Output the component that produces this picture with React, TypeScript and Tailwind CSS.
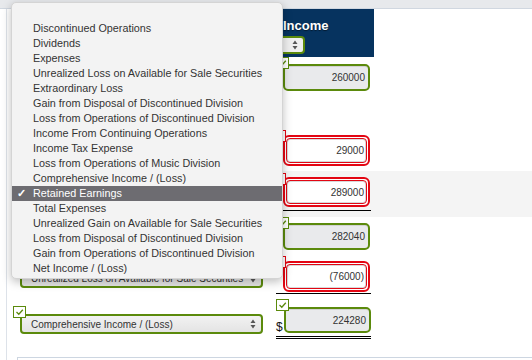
import React from "react";

const GREEN = "border-[#5b8a0c]";

const menuItems = [
  "Discontinued Operations",
  "Dividends",
  "Expenses",
  "Unrealized Loss on Available for Sale Securities",
  "Extraordinary Loss",
  "Gain from Disposal of Discontinued Division",
  "Loss from Operations of Discontinued Division",
  "Income From Continuing Operations",
  "Income Tax Expense",
  "Loss from Operations of Music Division",
  "Comprehensive Income / (Loss)",
  "Retained Earnings",
  "Total Expenses",
  "Unrealized Gain on Available for Sale Securities",
  "Loss from Disposal of Discontinued Division",
  "Gain from Operations of Discontinued Division",
  "Net Income / (Loss)",
];

function Arrows() {
  return (
    <svg width="6" height="10" viewBox="0 0 6 10" className="shrink-0">
      <path d="M3 0.5 L5.5 4 L0.5 4 Z" fill="#555" />
      <path d="M0.5 6 L5.5 6 L3 9.5 Z" fill="#555" />
    </svg>
  );
}

function Check({ ok, className }: { ok: boolean; className: string }) {
  if (!ok) {
    return <div className={`absolute h-[12px] w-[12px] border border-[#e30613] bg-white ${className}`} />;
  }
  return (
    <div className={`absolute h-[12px] w-[13px] border ${GREEN} bg-white ${className}`}>
      <svg width="11" height="10" viewBox="0 0 11 10" className="block">
        <path d="M2.5 5 L4.8 7.2 L8.8 2.8" fill="none" stroke="#5b8a0c" strokeWidth="1.3" />
      </svg>
    </div>
  );
}

function GreenBox({ value, h }: { value: string; h: string }) {
  return (
    <div
      className={`flex w-[87px] items-center justify-end rounded-[5px] border-2 ${GREEN} bg-[#e9eaec] pr-[3px] text-[10px] text-[#333] shadow-[inset_0_1px_0_#d2d2d2] ${h}`}
    >
      {value}
    </div>
  );
}

function RedBox({ value }: { value: string }) {
  return (
    <div className="h-[31px] w-[87px] rounded-[6px] border-2 border-[#e30613] bg-white p-[1px]">
      <div className="flex h-full items-center justify-end rounded-[4px] border border-[#e30613] bg-white pr-[2px] text-[10px] text-[#333] shadow-[inset_0_0_0_1px_#d9d9d9]">
        {value}
      </div>
    </div>
  );
}

function Select({ label }: { label: string }) {
  return (
    <div
      className={`flex h-[20px] w-[243px] items-center justify-between rounded-[4px] border-2 ${GREEN} bg-gradient-to-b from-[#f2f2f2] to-[#e4e4e4] pl-[9px] pr-[5px] text-[10px] text-[#333]`}
    >
      <span className="whitespace-nowrap">{label}</span>
      <Arrows />
    </div>
  );
}

export default function App() {
  return (
    <div className="relative h-[360px] w-[532px] overflow-hidden bg-white font-['Liberation_Sans',Arial,sans-serif]">
      <div className="h-[9px] border-b border-[#d0d7e0] bg-[#e7e9ec]" />

      <div className="ml-[6px] h-[351px] border-l border-[#dde2e9] pl-[6px]">
        {/* header */}
        <div className="flex h-[48px]">
          <div className="w-[263px]" />
          <div className="w-[98px] bg-[#06335f] pl-[7px] pt-[9px]">
            <div className="text-[13px] font-bold leading-[15px] text-white [text-shadow:0_1px_1px_rgba(0,0,0,0.5)]">Income</div>
            <div
              className={`-ml-[7px] mt-[3px] flex h-[18px] w-[29px] items-center justify-end rounded-[4px] border-2 ${GREEN} bg-[#efefef] pr-[5px]`}
            >
              <Arrows />
            </div>
          </div>
        </div>

        {/* row 1 */}
        <div className="flex h-[40px]">
          <div className="w-[263px]" />
          <div className="relative w-[98px] pl-[7px] pt-[7px]">
            <Check ok className="left-0 top-0" />
            <GreenBox value="260000" h="h-[27px]" />
          </div>
        </div>

        <div className="h-[33px]" />

        {/* row 2 */}
        <div className="flex h-[41px]">
          <div className="w-[263px]" />
          <div className="relative w-[98px] pl-[7px] pt-[5px]">
            <Check ok={false} className="left-[-2px] top-0" />
            <RedBox value="29000" />
          </div>
        </div>

        {/* row 3 */}
        <div className="flex h-[46px] bg-[#f4f4f4]">
          <div className="w-[263px]" />
          <div className="relative w-[98px] pt-[6px]">
            <Check ok={false} className="left-[-2px] top-[2px]" />
            <div className="pl-[7px]">
              <div className="h-[30px] w-[87px] rounded-[6px] border-2 border-[#e30613] bg-white p-[1px]">
                <div className="flex h-full items-center justify-end rounded-[4px] border border-[#e30613] bg-white pr-[2px] text-[10px] text-[#333] shadow-[inset_0_0_0_1px_#d9d9d9]">
                  289000
                </div>
              </div>
            </div>
            <div className="mt-[3px] h-px w-[95px] bg-black" />
          </div>
        </div>

        {/* row 4 */}
        <div className="flex h-[39px]">
          <div className="w-[263px]" />
          <div className="relative w-[98px] pl-[7px] pt-[6px]">
            <Check ok className="left-0 top-0" />
            <GreenBox value="282040" h="h-[27px]" />
          </div>
        </div>

        {/* row 5 */}
        <div className="flex h-[43px]">
          <div className="w-[263px] pl-[7px] pt-[12px]">
            <Select label="Unrealized Loss on Available for Sale Securities" />
          </div>
          <div className="relative w-[98px] pt-[5px]">
            <Check ok={false} className="left-[-2px] top-0" />
            <div className="pl-[7px]">
              <RedBox value="(76000)" />
            </div>
            <div className="mt-[1px] h-px w-[95px] bg-black" />
          </div>
        </div>

        {/* row 6 */}
        <div className="flex h-[58px]">
          <div className="relative w-[263px] pl-[7px] pt-[15px]">
            <Check ok className="left-0 top-[7px]" />
            <Select label="Comprehensive Income / (Loss)" />
          </div>
          <div className="relative w-[98px] pt-[8px]">
            <Check ok className="left-0 top-0" />
            <div className="flex items-end">
              <span className="w-[8px] text-[12px] leading-none text-[#111]">$</span>
              <GreenBox value="224280" h="h-[26px] items-start pt-[4px]" />
            </div>
            <div className="mt-[3px] h-[3px] w-[95px] border-y border-black" />
          </div>
        </div>

        <div className="ml-[4px] h-[20px] border-l border-t border-[#cdd6e1]" />
      </div>

      {/* open dropdown */}
      <div className="absolute left-[11px] top-[2px] h-[277px] w-[272px] rounded-[5px] border border-[#d4d4d4] bg-[#f3f3f3] pt-[18px] shadow-[0_3px_10px_rgba(0,0,0,0.25)]">
        {menuItems.map((item) => {
          const sel = item === "Retained Earnings";
          return (
            <div
              key={item}
              className={`relative h-[15px] whitespace-nowrap pl-[21px] text-[10.8px] leading-[15px] ${
                sel ? "bg-[#6d6c71] text-white" : "text-[#333]"
              }`}
            >
              {sel && <span className="absolute left-[5px] top-0 text-[11px] font-bold">✓</span>}
              {item}
            </div>
          );
        })}
      </div>
    </div>
  );
}
